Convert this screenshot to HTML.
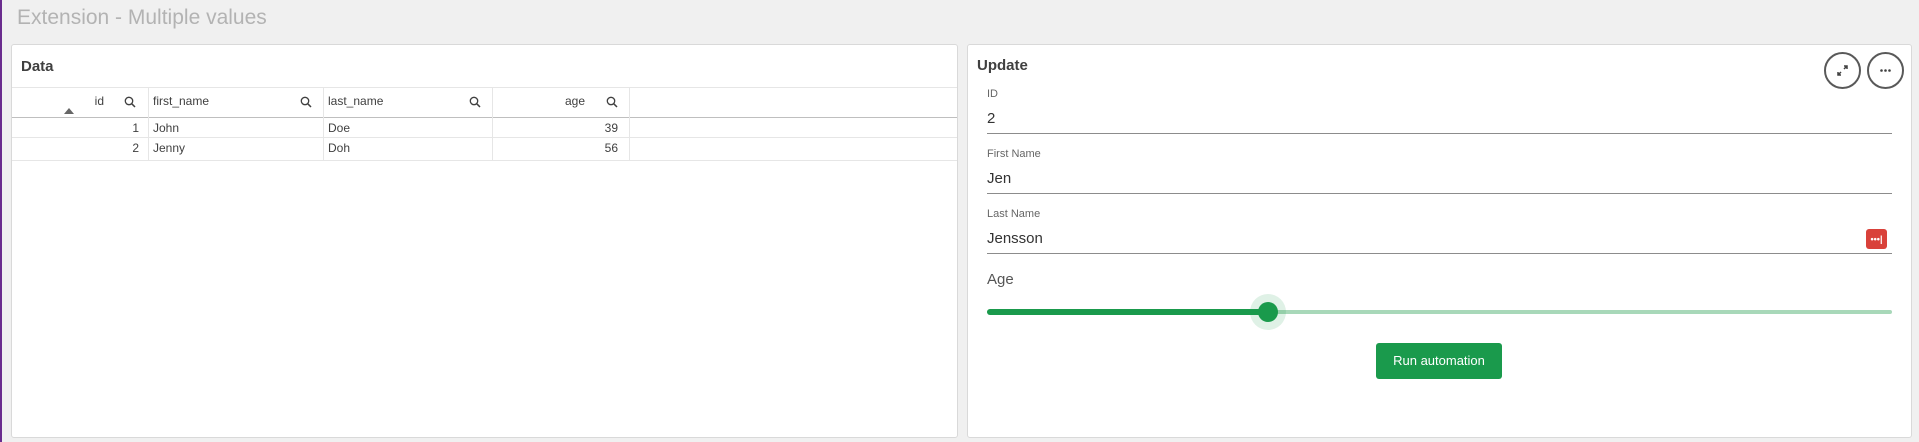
<!DOCTYPE html>
<html><head><meta charset="utf-8"><style>
*{box-sizing:border-box;margin:0;padding:0}
body{width:1919px;height:442px;background:#f0f0f0;font-family:"Liberation Sans",sans-serif;position:relative;overflow:hidden;color:#404040}
.abs{position:absolute;white-space:nowrap}
.panel{position:absolute;background:#fff;border:1px solid #d9d9d9;border-radius:3px}
.hl{position:absolute;height:1px;background:#e6e6e6}
.vl{position:absolute;width:1px;background:#e6e6e6}
.t{font-size:12px;color:#404040;position:absolute;white-space:nowrap;line-height:14px}
.lbl{font-size:11px;color:#666;position:absolute;line-height:12px}
.val{font-size:15px;color:#333;position:absolute;line-height:18px}
.ul{position:absolute;left:987px;width:905px;height:1px;background:#8c8c8c}
</style></head><body>
<div class="abs" style="left:0;top:0;width:2px;height:442px;background:#6a2c8e"></div>
<div class="abs" style="left:17px;top:5px;font-size:21px;color:#b3b3b3;line-height:26px">Extension - Multiple values</div>

<div class="panel" style="left:11px;top:44px;width:947px;height:394px"></div>
<div class="abs" style="left:21px;top:58px;font-size:15px;font-weight:bold;color:#404040;line-height:18px">Data</div>
<div class="hl" style="left:12px;top:87px;width:945px"></div>
<div class="hl" style="left:12px;top:117px;width:945px;background:#bfbfbf"></div>
<div class="hl" style="left:12px;top:137px;width:945px"></div>
<div class="hl" style="left:12px;top:160px;width:945px"></div>
<div class="vl" style="left:148px;top:87px;height:73px"></div>
<div class="vl" style="left:323px;top:87px;height:73px"></div>
<div class="vl" style="left:492px;top:87px;height:73px"></div>
<div class="vl" style="left:629px;top:87px;height:73px"></div>
<div class="abs" style="left:64px;top:108px;width:0;height:0;border-left:5px solid transparent;border-right:5px solid transparent;border-bottom:6px solid #666"></div>
<div class="t" style="right:1815px;top:94px">id</div>
<div class="t" style="left:153px;top:94px">first_name</div>
<div class="t" style="left:328px;top:94px">last_name</div>
<div class="t" style="right:1334px;top:94px">age</div>
<svg class="abs" style="left:124px;top:96px" width="12" height="12" viewBox="0 0 12 12"><circle cx="5" cy="5" r="3.7" fill="none" stroke="#404040" stroke-width="1.3"/><path d="M7.7 7.7L11 11" stroke="#404040" stroke-width="1.5"/></svg>
<svg class="abs" style="left:300px;top:96px" width="12" height="12" viewBox="0 0 12 12"><circle cx="5" cy="5" r="3.7" fill="none" stroke="#404040" stroke-width="1.3"/><path d="M7.7 7.7L11 11" stroke="#404040" stroke-width="1.5"/></svg>
<svg class="abs" style="left:469px;top:96px" width="12" height="12" viewBox="0 0 12 12"><circle cx="5" cy="5" r="3.7" fill="none" stroke="#404040" stroke-width="1.3"/><path d="M7.7 7.7L11 11" stroke="#404040" stroke-width="1.5"/></svg>
<svg class="abs" style="left:606px;top:96px" width="12" height="12" viewBox="0 0 12 12"><circle cx="5" cy="5" r="3.7" fill="none" stroke="#404040" stroke-width="1.3"/><path d="M7.7 7.7L11 11" stroke="#404040" stroke-width="1.5"/></svg>
<div class="t" style="right:1780px;top:121px">1</div>
<div class="t" style="left:153px;top:121px">John</div>
<div class="t" style="left:328px;top:121px">Doe</div>
<div class="t" style="right:1301px;top:121px">39</div>
<div class="t" style="right:1780px;top:141px">2</div>
<div class="t" style="left:153px;top:141px">Jenny</div>
<div class="t" style="left:328px;top:141px">Doh</div>
<div class="t" style="right:1301px;top:141px">56</div>

<div class="panel" style="left:967px;top:44px;width:945px;height:394px"></div>
<div class="abs" style="left:977px;top:57px;font-size:15px;font-weight:bold;color:#404040;line-height:18px">Update</div>
<div class="abs" style="left:1824px;top:52px;width:37px;height:37px;border:2px solid #595959;border-radius:50%"></div>
<svg class="abs" style="left:1833px;top:61px" width="19" height="19" viewBox="0 0 19 19"><path d="M11 5h3v3M14 5l-3 3M5 11v3h3M5 14l3-3" stroke="#404040" stroke-width="1.5" fill="none"/></svg>
<div class="abs" style="left:1867px;top:52px;width:37px;height:37px;border:2px solid #595959;border-radius:50%"></div>
<svg class="abs" style="left:1876px;top:61px" width="19" height="19" viewBox="0 0 19 19"><circle cx="5.5" cy="9.5" r="1.3" fill="#404040"/><circle cx="9.5" cy="9.5" r="1.3" fill="#404040"/><circle cx="13.5" cy="9.5" r="1.3" fill="#404040"/></svg>

<div class="lbl" style="left:987px;top:88px">ID</div>
<div class="val" style="left:987px;top:110px">2</div>
<div class="ul" style="top:133px"></div>
<div class="lbl" style="left:987px;top:148px">First Name</div>
<div class="val" style="left:987px;top:170px">Jen</div>
<div class="ul" style="top:193px"></div>
<div class="lbl" style="left:987px;top:208px">Last Name</div>
<div class="val" style="left:987px;top:230px">Jensson</div>
<div class="ul" style="top:253px"></div>
<div class="abs" style="left:1866px;top:229px;width:21px;height:20px;background:#d9413a;border-radius:3px;color:#fff;font-size:9px;line-height:20px;text-align:center;font-weight:bold">•••|</div>
<div class="abs" style="left:987px;top:271px;font-size:15px;color:#555;line-height:18px">Age</div>
<div class="abs" style="left:987px;top:310px;width:905px;height:4px;background:#a8d8b9;border-radius:2px"></div>
<div class="abs" style="left:987px;top:309px;width:281px;height:6px;background:#1a9a4c;border-radius:3px"></div>
<div class="abs" style="left:1250px;top:294px;width:36px;height:36px;border-radius:50%;background:rgba(26,154,76,0.14)"></div>
<div class="abs" style="left:1258px;top:302px;width:20px;height:20px;border-radius:50%;background:#1a9a4c"></div>
<div class="abs" style="left:1376px;top:343px;width:126px;height:36px;background:#1a9a4c;border-radius:3px;color:#fff;font-size:13px;line-height:36px;text-align:center">Run automation</div>
</body></html>
